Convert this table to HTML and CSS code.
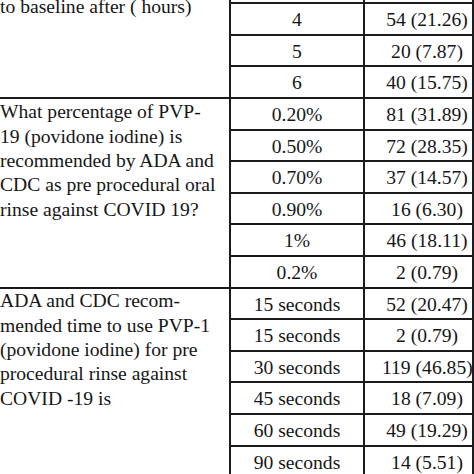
FILE: index.html
```html
<!DOCTYPE html>
<html lang="en">
<head>
<meta charset="utf-8">
<title>Survey responses</title>
<link rel="stylesheet" href="styles.css">
</head>
<body>
<div class="survey">
  <div class="cell q q-first span-4">to baseline after ( hours)</div>
  <div class="cell opt"></div><div class="cell n"></div>
  <div class="cell opt">4</div><div class="cell n">54 (21.26)</div>
  <div class="cell opt">5</div><div class="cell n">20 (7.87)</div>
  <div class="cell opt">6</div><div class="cell n">40 (15.75)</div>

  <div class="cell q span-6">What percentage of PVP-<br>19 (povidone iodine) is<br>recommended by ADA and<br>CDC as pre procedural oral<br>rinse against COVID 19?</div>
  <div class="cell opt">0.20%</div><div class="cell n">81 (31.89)</div>
  <div class="cell opt">0.50%</div><div class="cell n">72 (28.35)</div>
  <div class="cell opt">0.70%</div><div class="cell n">37 (14.57)</div>
  <div class="cell opt">0.90%</div><div class="cell n">16 (6.30)</div>
  <div class="cell opt">1%</div><div class="cell n">46 (18.11)</div>
  <div class="cell opt">0.2%</div><div class="cell n">2 (0.79)</div>

  <div class="cell q q-last span-6">ADA and CDC recom-<br>mended time to use PVP-1<br>(povidone iodine) for pre<br>procedural rinse against<br>COVID -19 is</div>
  <div class="cell opt">15 seconds</div><div class="cell n">52 (20.47)</div>
  <div class="cell opt">15 seconds</div><div class="cell n">2 (0.79)</div>
  <div class="cell opt">30 seconds</div><div class="cell n">119 (46.85)</div>
  <div class="cell opt">45 seconds</div><div class="cell n">18 (7.09)</div>
  <div class="cell opt">60 seconds</div><div class="cell n">49 (19.29)</div>
  <div class="cell opt">90 seconds</div><div class="cell n">14 (5.51)</div>
</div>
</body>
</html>
```

FILE: styles.css
```css
html, body {
  margin: 0;
  padding: 0;
  overflow: hidden;
  background: #ffffff;
}

body {
  width: 474px;
  height: 474px;
}

.survey {
  display: grid;
  grid-template-columns: 234px 134px 109px;
  grid-auto-rows: 31.6px;
  margin-top: -27.3px;
  margin-left: -3px;
  width: 477px;
  font-family: "Liberation Serif", serif;
  font-size: 19.6px;
  line-height: 24.4px;
  color: #161616;
}

.cell {
  box-sizing: border-box;
  border-right: 2px solid #1b1b1b;
  border-bottom: 2px solid #1b1b1b;
  white-space: nowrap;
}

.q {
  grid-column: 1;
  text-align: left;
  padding: 1.2px 0 0 3px;
}

.span-4 { grid-row: span 4; }
.span-6 { grid-row: span 6; }

.q-first {
  padding-top: 22px;
}

.q-last {
  padding-top: 0.6px;
}

.opt {
  grid-column: 2;
  text-align: center;
  padding-top: 4px;
}

.n {
  grid-column: 3;
  text-align: center;
  padding: 4px 0 0 17px;
}
```
